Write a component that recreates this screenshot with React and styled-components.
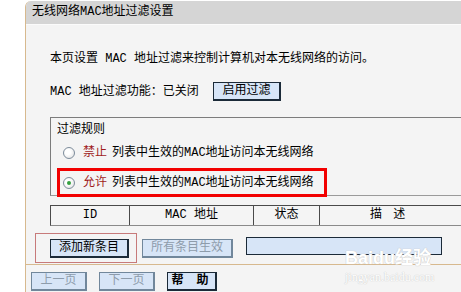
import React from 'react';
import styled, { createGlobalStyle } from 'styled-components';

const GlobalStyle = createGlobalStyle`
  html, body { margin: 0; padding: 0; background: #fff; }
  body {
    font-family: "Liberation Mono", "Noto Sans CJK SC", monospace;
    font-size: 12px;
    color: #000;
  }
`;

const TAN = '#d7b98e';

function App() {
  return (
    <Page>
      <GlobalStyle />
      <Panel>
        <Header>无线网络MAC地址过滤设置</Header>
        <Content>
          <Intro>本页设置 MAC 地址过滤来控制计算机对本无线网络的访问。</Intro>
          <StatusRow>
            <StatusLabel>MAC 地址过滤功能：已关闭</StatusLabel>
            <Button width={68}>启用过滤</Button>
          </StatusRow>
          <RuleBox>
            <RuleTitle>过滤规则</RuleTitle>
            <RuleRow>
              <Radio />
              <Keyword>禁止</Keyword>
              列表中生效的MAC地址访问本无线网络
            </RuleRow>
            <RuleRow highlighted>
              <Radio checked />
              <Keyword>允许</Keyword>
              列表中生效的MAC地址访问本无线网络
            </RuleRow>
          </RuleBox>
          <TableHead>
            <HeadCell>ID</HeadCell>
            <HeadCell>MAC 地址</HeadCell>
            <HeadCell>状态</HeadCell>
            <HeadCell spaced>描 述</HeadCell>
          </TableHead>
          <ActionRow>
            <MarkFrame>
              <Button width={79}>添加新条目</Button>
            </MarkFrame>
            <Button width={91} disabled>所有条目生效</Button>
            <Field />
          </ActionRow>
        </Content>
        <Footer>
          <Button width={56} disabled>上一页</Button>
          <Button width={56} disabled>下一页</Button>
          <Button width={50} spaced>帮 助</Button>
        </Footer>
      </Panel>
      <Watermark>
        <Brand>Baidu经验</Brand>
        <Site>jingyan.baidu.com</Site>
      </Watermark>
    </Page>
  );
}

export default App;

const Page = styled.div`
  position: relative;
  width: 461px;
  height: 292px;
  overflow: hidden;
  box-sizing: border-box;
  padding: 1px 0 0 25px;
  background: #fff;
`;

const Panel = styled.div`
  width: 470px;
  background: #f4f4f4;
  border-left: 1px solid ${TAN};
  border-bottom: 1px solid ${TAN};
  border-top-left-radius: 6px;
  overflow: hidden;
`;

const Header = styled.div`
  height: 23px;
  line-height: 23px;
  padding-left: 6px;
  background: #d5d5d5;
  border-bottom: 1px solid #fbfbfb;
`;

const Content = styled.div`
  padding: 26px 0 0 24px;
`;

const Intro = styled.p`
  margin: 0;
  line-height: 16px;
`;

const StatusRow = styled.div`
  display: flex;
  align-items: center;
  margin-top: 15px;
  height: 19px;
`;

const StatusLabel = styled.span`
  flex: 0 0 163px;
  line-height: 16px;
`;

const Button = styled.button`
  box-sizing: border-box;
  width: ${p => p.width}px;
  height: 19px;
  padding: 0;
  font-family: inherit;
  font-size: 12px;
  line-height: 16px;
  letter-spacing: ${p => (p.spaced ? '3px' : '0')};
  font-weight: ${p => (p.spaced ? 600 : 400)};
  color: ${p => (p.disabled ? '#8e9cab' : '#000')};
  background: #d7e5f7;
  border: 1px solid ${p => (p.disabled ? '#71879b' : '#1b2a38')};
  border-width: 1px 2px 2px 1px;
`;

const RuleBox = styled.div`
  margin-top: 16px;
  border-top: 1px solid #7c7c7c;
  border-left: 1px solid #7c7c7c;
  border-bottom: 1px solid #9a9a9a;
  padding: 4px 0 0 6px;
`;

const RuleTitle = styled.div`
  line-height: 16px;
`;

const RuleRow = styled.div`
  position: relative;
  z-index: 1;
  box-sizing: border-box;
  display: flex;
  align-items: center;
  margin-top: 4px;
  width: ${p => (p.highlighted ? '270px' : 'auto')};
  height: ${p => (p.highlighted ? '29px' : '22px')};
  padding-left: ${p => (p.highlighted ? '3px' : '6px')};
  border: ${p => (p.highlighted ? '3px solid #f20000' : 'none')};
  margin-bottom: ${p => (p.highlighted ? '-2px' : '0')};
  line-height: 16px;
`;

const Radio = styled.span`
  position: relative;
  box-sizing: border-box;
  flex: 0 0 12px;
  height: 12px;
  margin-right: 8px;
  border-radius: 50%;
  border: 1px solid #7d8c9b;
  background: radial-gradient(circle at 40% 40%, #ffffff 30%, #dcdcdc 100%);
  &::after {
    content: '';
    display: ${p => (p.checked ? 'block' : 'none')};
    position: absolute;
    left: 3px;
    top: 3px;
    width: 4px;
    height: 4px;
    border-radius: 50%;
    background: #34a040;
  }
`;

const Keyword = styled.span`
  color: #a01b1b;
  margin-right: 5px;
`;

const TableHead = styled.div`
  display: grid;
  grid-template-columns: 78px 124px 66px 1fr;
  margin-top: 9px;
  height: 21px;
  box-sizing: border-box;
  border-top: 1px solid #4a4a4a;
  border-left: 1px solid #4a4a4a;
  border-bottom: 1px solid #8a8a8a;
`;

const HeadCell = styled.div`
  text-align: ${p => (p.spaced ? 'left' : 'center')};
  padding-left: ${p => (p.spaced ? '50px' : '0')};
  line-height: 19px;
  letter-spacing: ${p => (p.spaced ? '2px' : '0')};
  & + & {
    border-left: 1px solid #4a4a4a;
  }
`;

const ActionRow = styled.div`
  display: flex;
  align-items: center;
  margin: 7px 0 0 -15px;
`;

const MarkFrame = styled.div`
  box-sizing: border-box;
  height: 30px;
  width: 102px;
  padding: 5px 0 0 14px;
  border: 1px solid #c77a7a;
  margin-right: 5px;
`;

const Field = styled.div`
  box-sizing: border-box;
  width: 196px;
  height: 18px;
  margin: 0 0 5px 13px;
  background: #d7e5f7;
  border: 1px solid #1b2a38;
`;

const Footer = styled.div`
  display: flex;
  gap: 12px;
  margin-top: 1px;
  padding: 7px 0 1px 5px;
  border-top: 1px solid ${TAN};
`;

const Watermark = styled.div`
  position: absolute;
  left: 345px;
  top: 246px;
  display: flex;
  flex-direction: column;
  align-items: flex-start;
  white-space: nowrap;
  pointer-events: none;
`;

const Brand = styled.div`
  font-family: "Liberation Sans", "Noto Sans CJK SC", sans-serif;
  font-size: 18px;
  font-weight: 700;
  color: #fff;
  text-shadow: 0 0 1px #c8c8c8, 0 0 1px #c8c8c8;
  line-height: 24px;
`;

const Site = styled.div`
  font-family: "Liberation Serif", serif;
  font-size: 12px;
  color: #fff;
  text-shadow: 0 0 1px #cccccc, 0 0 1px #cccccc;
  line-height: 14px;
`;
